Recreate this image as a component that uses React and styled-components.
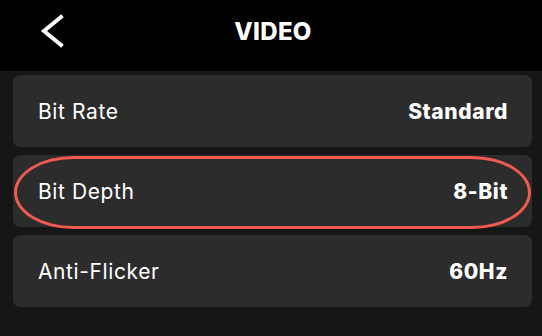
import React from "react";
import styled, { createGlobalStyle } from "styled-components";

const GlobalStyle = createGlobalStyle`
  html, body {
    margin: 0;
    padding: 0;
    background: #161616;
  }
  body {
    font-family: Inter, "Noto Sans", "Liberation Sans", sans-serif;
    color: #fff;
  }
`

const Screen = styled.div`
  width: 542px;
  height: 336px;
  background: #161616;
  overflow: hidden;
`

const Header = styled.header`
  height: 71px;
  box-sizing: border-box;
  padding: 0 0 9px 38px;
  background: #000;
  display: grid;
  grid-template-columns: 1fr auto 1fr;
  align-items: center;
`

const BackButton = styled.button`
  justify-self: start;
  display: flex;
  padding: 0;
  border: none;
  background: none;
  cursor: pointer;
`

const Title = styled.h1`
  margin: 0 0 0 -34px;
  font-size: 24px;
  font-weight: 800;
  letter-spacing: 0.3px;
  color: #fff;
`

const List = styled.div`
  display: flex;
  flex-direction: column;
  gap: 8px;
  padding: 4px 10px 0 13px;
`

const Row = styled.div`
  position: relative;
  height: 72px;
  box-sizing: border-box;
  padding: 0 24px 0 25px;
  border-radius: 7px;
  background: #2c2c2c;
  display: flex;
  align-items: center;
  justify-content: space-between;
  font-size: 21px;
  letter-spacing: 0.6px;
`

const Label = styled.span`
  font-weight: 400;
`

const Value = styled.span`
  font-weight: 800;
`

const Highlight = styled.span`
  position: absolute;
  top: 1px;
  left: 1px;
  right: 1px;
  bottom: -2px;
  border: 3px solid #f05a50;
  border-radius: 60px / 37px;
  pointer-events: none;
`

const settings = [
  { label: "Bit Rate", value: "Standard" },
  { label: "Bit Depth", value: "8-Bit", highlighted: true },
  { label: "Anti-Flicker", value: "60Hz" },
]

function App() {
  return (
    <Screen>
      <GlobalStyle />
      <Header>
        <BackButton aria-label="Back">
          <svg width="28" height="36" viewBox="0 0 28 36">
            <polyline
              points="23,4 6,18 23,32"
              fill="none"
              stroke="#fff"
              strokeWidth="4"
              strokeLinecap="square"
            />
          </svg>
        </BackButton>
        <Title>VIDEO</Title>
        <span />
      </Header>
      <List>
        {settings.map((s) => (
          <Row key={s.label}>
            <Label>{s.label}</Label>
            <Value>{s.value}</Value>
            {s.highlighted && <Highlight />}
          </Row>
        ))}
      </List>
    </Screen>
  )
}

export default App;
